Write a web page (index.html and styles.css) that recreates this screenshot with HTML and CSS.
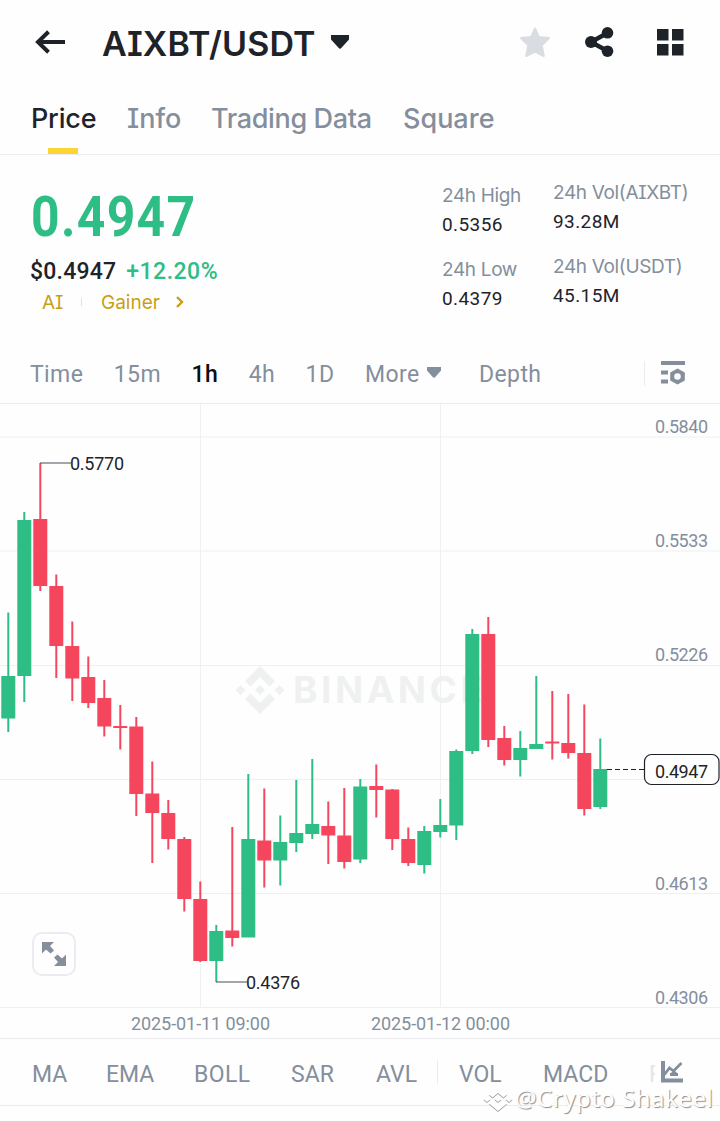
FILE: index.html
```
<!DOCTYPE html>
<html lang="en">
<head>
    <meta charset="UTF-8">
    <meta name="viewport" content="width=device-width, initial-scale=1.0">
    <title>AIXBT/USDT</title>
    <link rel="stylesheet" href="styles.css">
</head>
<body>
    <header class="topbar">
        <svg class="back" width="32" height="24" viewBox="0 0 32 24" fill="none" stroke="#1e2329" stroke-width="4">
            <path d="M30 12H3M13.500 1.800L3 12L13.500 22.200"/>
        </svg>
        <h1>AIXBT/USDT</h1>
        <svg class="caret" width="18" height="14" viewBox="0 0 18 14" fill="#1e2329">
            <path d="M0 0H18V4.500L10.500 12.800Q9 14.500 7.500 12.800L0 4.500Z"/>
        </svg>
        <div class="actions">
            <svg width="30" height="31" viewBox="0 0 30 31" fill="#d9dce1" stroke="#d9dce1" stroke-width="2" stroke-linejoin="round">
                <path d="M15 1.500L18.700 10L29 11L21.700 18.300L23.800 29L15 24.600L6.200 29L8.300 18.300L1 11L11.300 10Z"/>
            </svg>
            <svg width="29" height="30" viewBox="0 0 29 30" fill="#1e2329">
                <path d="M22.500 6L6 15L22.500 24" fill="none" stroke="#1e2329" stroke-width="4.500"/>
                <circle cx="6" cy="15" r="6"/>
                <circle cx="22.500" cy="5.800" r="5.800"/>
                <circle cx="22.500" cy="24.200" r="5.800"/>
            </svg>
            <svg width="28" height="28" viewBox="0 0 28 28" fill="#1e2329">
                <path d="M1 1H12.500V12.500H1ZM16 1H27.500V12.500H16ZM1 16H12.500V27.500H1ZM16 16H27.500V27.500H16Z"/>
            </svg>
        </div>
    </header>

    <nav class="tabs">
        <a class="tab active price-tab">Price</a>
        <a class="tab info-tab">Info</a>
        <a class="tab data-tab">Trading Data</a>
        <a class="tab square-tab">Square</a>
    </nav>

    <section class="ticker">
        <div class="ticker-main">
            <div class="last-price">0.4947</div>
            <div class="change"><span>$0.4947</span><span class="up">+12.20%</span></div>
            <div class="tags">
                <span class="tag-ai">AI</span>
                <i></i>
                <span>Gainer</span>
                <svg width="8" height="12" viewBox="0 0 8 12" fill="none" stroke="#c99e17" stroke-width="2.400"><path d="M1 1L6 6L1 11"/></svg>
            </div>
        </div>
        <dl class="stats">
            <dt>24h High</dt>
            <dd>0.5356</dd>
            <dt>24h Low</dt>
            <dd>0.4379</dd>
        </dl>
        <dl class="stats stats-vol">
            <dt>24h Vol(AIXBT)</dt>
            <dd>93.28M</dd>
            <dt>24h Vol(USDT)</dt>
            <dd>45.15M</dd>
        </dl>
    </section>

    <nav class="intervals">
        <span>Time</span>
        <span>15m</span>
        <span class="active">1h</span>
        <span>4h</span>
        <span>1D</span>
        <span class="more">More
            <svg width="14" height="11" viewBox="0 0 14 11" fill="#848e9c"><path d="M0 0H14V3.500L8.300 10Q7 11.300 5.700 10L0 3.500Z"/></svg>
        </span>
        <span>Depth</span>
        <div class="chart-settings">
            <svg width="26" height="25" viewBox="0 0 26 25" fill="#848e9c">
                <path d="M1 0H25V4H1ZM1 9.500H8V13.500H1ZM1 18.500H8V22.500H1Z"/>
                <path fill-rule="evenodd" d="M17.500 7.500L24.800 11.500V19.500L17.500 23.500L10.200 19.500V11.500ZM17.500 12.200A3.300 3.300 0 1 0 17.500 18.800A3.300 3.300 0 1 0 17.500 12.200Z"/>
            </svg>
        </div>
    </nav>

    <main class="chart">
        <svg class="plot" width="720" height="634" viewBox="0 404 720 634">
            <path class="grid" d="M0 437H720M0 551H720M0 665.500H720M0 779.500H720M0 893.500H720M0 1007.500H720M200.500 403V1007M440.500 403V1007"/>

            <g class="brand">
                <path d="M260 666L275 681L269.500 686.500L260 677L250.500 686.500L245 681ZM260 714L245 699L250.500 693.500L260 703L269.500 693.500L275 699ZM235.500 690L240.500 685L245.500 690L240.500 695ZM274.500 690L279.500 685L284.500 690L279.500 695ZM255 690L260 685L265 690L260 695Z"/>
                <text x="293" y="703" textLength="190">BINANCE</text>
            </g>

            <g id="candles"></g>

            <g class="marker">
                <path d="M40 463H71M216 982H247"/>
                <text x="70" y="470" textLength="54">0.5770</text>
                <text x="246" y="989" textLength="54">0.4376</text>
            </g>

            <g class="axis">
                <text x="655" y="433" textLength="53">0.5840</text>
                <text x="655" y="547" textLength="53">0.5533</text>
                <text x="655" y="661" textLength="53">0.5226</text>
                <text x="655" y="890" textLength="53">0.4613</text>
                <text x="655" y="1004" textLength="53">0.4306</text>
                <text x="131" y="1030" textLength="139">2025-01-11 09:00</text>
                <text x="371" y="1030" textLength="139">2025-01-12 00:00</text>
            </g>

            <g class="current">
                <path d="M607 769.500H644"/>
                <rect x="644.500" y="754.500" width="74.500" height="30" rx="7"/>
                <text x="655" y="778" textLength="53">0.4947</text>
            </g>
        </svg>
        <button class="expand" aria-label="Full screen">
            <svg width="26" height="26" viewBox="0 0 26 26" fill="#848e9c">
                <path d="M0 0H12L8 4L12 8.500L8.500 11.500L4 7.500L0 11.500ZM24 24H12L16 20L12 15.500L15.500 12.500L20 16.500L24 12.500Z"/>
            </svg>
        </button>
    </main>

    <footer class="indicators">
        <span class="ma">MA</span>
        <span class="ema">EMA</span>
        <span class="boll">BOLL</span>
        <span class="sar">SAR</span>
        <span class="avl">AVL</span>
        <i></i>
        <span class="vol">VOL</span>
        <span class="macd">MACD</span>
        <span class="faded">R</span>
        <svg width="23" height="23" viewBox="0 0 23 23" fill="#848e9c">
            <path d="M0 1H4V18.500H22V22.500H0Z"/>
            <path d="M3 15L8.500 8L12.500 11L20.500 3" fill="none" stroke="#848e9c" stroke-width="2.800"/>
            <path d="M13 10L17 14H9ZM9 13H17V16H9Z"/>
        </svg>
    </footer>

    <div class="credit">
        <svg width="30" height="28" viewBox="0 0 30 28" fill="#fff">
            <path d="M15 2L24 9.500L20.500 12.500L15 8L9.500 12.500L6 9.500ZM4 11L7.500 14L4 17L.5 14ZM26 11L29.500 14L26 17L22.500 14ZM15 11L18.500 14L15 17L11.500 14ZM6 18.500L9.500 15.500L15 20L20.500 15.500L24 18.500L15 26Z"/>
        </svg>
        <span>@Crypto Shakeel</span>
    </div>

    <script src="chart.js"></script>
</body>
</html>
```
FILE: styles.css
```
* {
    box-sizing: border-box;
}
body {
    position: relative;
    margin: 0;
    width: 720px;
    height: 1121px;
    overflow: hidden;
    background: #fefefe;
    color: #1e2329;
    font-family: Inter, Roboto, sans-serif;
    font-feature-settings: "cv08" 1;
}
svg {
    display: block;
    flex-shrink: 0;
}

/* header */
.topbar {
    display: flex;
    align-items: center;
    height: 84px;
    padding: 0 36px 0 35px;
}
h1 {
    margin: 3px 0 0 35px;
    width: 213px;
    font-size: 34px;
    font-weight: 600;
    line-height: 40px;
    letter-spacing: .15px;
    white-space: nowrap;
}
.caret {
    margin-left: 16px;
}
.actions {
    display: flex;
    align-items: center;
    margin-left: auto;
}
.actions svg + svg {
    margin-left: 35px;
}
.actions svg:last-child {
    margin-left: 42px;
}

/* tabs */
.tabs {
    display: flex;
    height: 71px;
    padding-left: 32px;
    border-bottom: 1px solid #eaecef;
}
.tab {
    position: relative;
    padding-top: 18px;
    height: 70px;
    font-size: 27px;
    font-weight: 500;
    line-height: 34px;
    color: #848e9c;
    white-space: nowrap;
}
.tab.active {
    color: #1e2329;
}
.tab.active::after {
    content: "";
    position: absolute;
    left: 17px;
    bottom: 0;
    width: 30px;
    height: 6px;
    background: #fcd535;
}
.price-tab {
    width: 96px;
    margin-left: -1px;
    letter-spacing: -.2px;
}
.info-tab {
    width: 84px;
}
.data-tab {
    width: 192px;
    letter-spacing: -.35px;
}

/* ticker */
.ticker {
    display: flex;
    height: 189px;
    padding-left: 31px;
}
.ticker-main {
    width: 411px;
    padding-top: 30px;
}
.last-price {
    font: 700 56px/64px Roboto, sans-serif;
    letter-spacing: 1.500px;
    color: #2ebd85;
    transform: scaleX(.89);
    transform-origin: left;
}
.change {
    display: flex;
    gap: 10px;
    margin: 10px 0 -1px -1px;
    font: 500 23px/26px Roboto, sans-serif;
    letter-spacing: .2px;
}
.up {
    color: #2ebd85;
    letter-spacing: .5px;
}
.tags {
    display: flex;
    align-items: center;
    height: 34px;
    padding: 2px 0 0 11px;
    font-size: 19px;
    color: #c99e17;
}
.tag-ai {
    width: 21px;
}
.tags i {
    width: 1px;
    height: 8px;
    margin: 0 19px 0 18px;
    background: #dfe2e6;
}
.tags svg {
    margin-left: 16px;
}
.stats {
    width: 111px;
    margin: 0;
    padding-top: 26px;
    font-size: 19px;
    line-height: 30px;
    white-space: nowrap;
}
.stats-vol {
    padding-top: 23px;
}
.stats dt {
    color: #848e9c;
    letter-spacing: -.35px;
}
.stats dd {
    margin: -1px 0 16px;
    font-family: Roboto, sans-serif;
    line-height: 29px;
    letter-spacing: .4px;
}

/* intervals */
.intervals {
    display: flex;
    align-items: center;
    height: 59px;
    padding: 2px 34px 0 30px;
    font: 23px/30px Roboto, sans-serif;
    letter-spacing: .4px;
    color: #848e9c;
    gap: 30.500px;
}
.intervals .active {
    font-weight: 500;
    color: #0b0e11;
}
.more {
    display: flex;
    align-items: center;
    gap: 7px;
    margin-right: 8px;
}
.more svg {
    margin-top: -5px;
}
.chart-settings {
    height: 25px;
    margin: -3px 0 0 auto;
    padding-left: 15px;
    border-left: 1px solid #eaecef;
}

/* chart */
.chart {
    position: relative;
    height: 636px;
    border-top: 1px solid #eaecef;
    border-bottom: 1px solid #eaecef;
}
.plot {
    font: 18px Roboto, sans-serif;
}
.grid {
    fill: none;
    stroke: #eff0f1;
}
.brand {
    fill: #eff1f1;
    font: 700 37px Inter, sans-serif;
}
.up-candle {
    fill: #2ebd85;
}
.down-candle {
    fill: #f6465d;
}
.marker path {
    fill: none;
    stroke: #474d57;
}
.marker text,
.current text {
    fill: #1e2329;
}
.axis {
    fill: #848e9c;
}
.current path,
.current rect {
    fill: #fefefe;
    stroke: #1e2329;
    stroke-width: 1.200;
}
.current path {
    stroke-dasharray: 5 3;
}
.expand {
    position: absolute;
    left: 32px;
    bottom: 62px;
    width: 44px;
    height: 44px;
    padding: 8px;
    border: 2px solid #eaecef;
    border-radius: 10px;
    background: #fefefe;
}

/* indicators */
.indicators {
    display: flex;
    align-items: center;
    height: 67px;
    padding: 5px 36px 0 32px;
    border-bottom: 1px solid #eaecef;
    font: 23px/30px Roboto, sans-serif;
    color: #848e9c;
    white-space: nowrap;
}
.ma {
    width: 74px;
}
.ema {
    width: 88px;
}
.boll {
    width: 97px;
    letter-spacing: .4px;
}
.sar {
    width: 85px;
}
.avl {
    width: 61px;
}
.indicators i {
    width: 1px;
    height: 24px;
    margin-top: -5px;
    background: #eaecef;
}
.vol {
    width: 105px;
    padding-left: 21px;
}
.macd {
    width: 106px;
}
.faded {
    width: 6px;
    overflow: hidden;
    color: #e3e5e8;
}
.indicators svg {
    margin: -7px 0 0 auto;
}

.credit {
    position: absolute;
    left: 483px;
    top: 1082px;
    display: flex;
    align-items: center;
    gap: 2px;
    color: #fff;
    font: 24px/30px "Noto Sans", sans-serif;
    letter-spacing: .5px;
    white-space: nowrap;
    text-shadow: 1px 1px 1px #8c8c8c;
}
.credit svg {
    margin-top: 3px;
    filter: drop-shadow(0 1px .5px #999);
}
```
FILE: chart.js
```
// high, body top, body bottom, low, direction
const candles = [
    [612.5, 676, 718.5, 732, 1],
    [512, 520, 676, 702, 1],
    [463, 519, 586, 591, 0],
    [574.5, 586, 646, 678, 0],
    [621.5, 646, 678.5, 701, 0],
    [656.5, 677, 703, 708, 0],
    [680, 698, 726.5, 736.5, 0],
    [705, 726, 728, 749.5, 0],
    [717, 726.5, 794, 816, 0],
    [761.5, 793.5, 813, 863, 0],
    [800, 813, 839, 849.5, 0],
    [837, 839, 899, 911.5, 0],
    [881.5, 899, 961, 962, 0],
    [925, 931, 961, 982, 1],
    [827, 930.5, 938, 946.5, 0],
    [774, 839, 937.5, 937.5, 1],
    [788.5, 840.5, 860.5, 887.5, 0],
    [815.5, 842, 860.5, 885.5, 1],
    [780, 833, 843, 852, 1],
    [759, 824, 834, 839, 1],
    [801.5, 826, 835.5, 864, 0],
    [788, 835.5, 862, 868.5, 0],
    [779, 786.5, 859.5, 863, 1],
    [764.5, 786, 790, 817.5, 0],
    [789, 789.5, 839, 850, 0],
    [827.5, 839, 863, 866, 0],
    [826, 831, 865, 873.5, 1],
    [799, 825, 832, 837.5, 1],
    [749.5, 751, 825.5, 840, 1],
    [629, 634, 751, 754, 1],
    [617, 634, 740, 747, 0],
    [726, 738, 760, 765.5, 0],
    [731, 748, 760, 776.5, 1],
    [676, 744, 749, 749, 1],
    [691, 741.5, 743.5, 759.5, 0],
    [694, 743, 753, 758.5, 0],
    [704.5, 753, 809, 815.5, 0],
    [738.5, 769, 807, 809, 1]
];

const group = document.getElementById('candles');

candles.forEach(function([high, top, bottom, low, up], i) {
    const x = 8.3 + i * 16;
    const path = document.createElementNS('http://www.w3.org/2000/svg', 'path');
    path.setAttribute('class', up ? 'up-candle' : 'down-candle');
    path.setAttribute('d', `M${x - 7} ${top}h14V${bottom}h-14ZM${x - 1} ${high}h2V${low}h-2Z`);
    group.appendChild(path);
});
```
